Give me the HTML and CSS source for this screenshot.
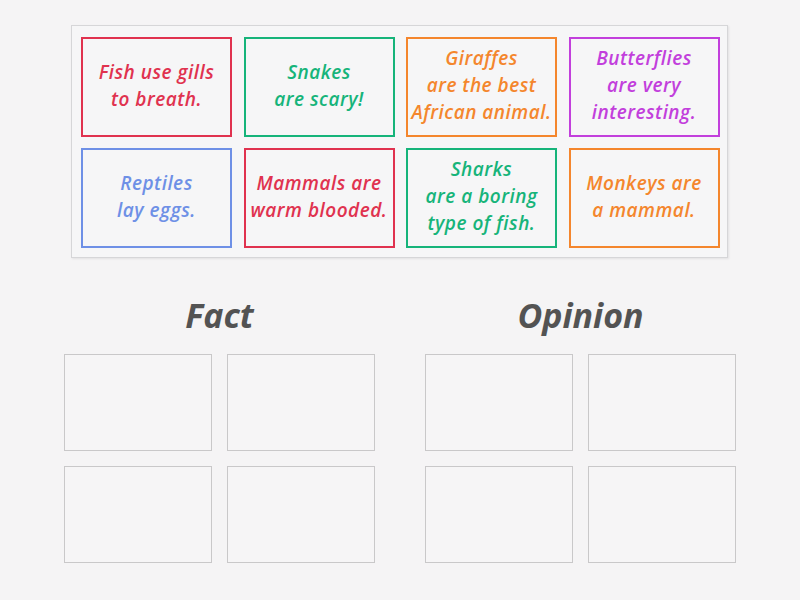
FILE: index.html
```html
<!DOCTYPE html>
<html lang="en">
<head>
    <meta charset="UTF-8">
    <meta name="viewport" content="width=device-width, initial-scale=1.0">
    <title>Fact or Opinion</title>
    <link rel="stylesheet" href="styles.css">
</head>
<body>

    <!-- cards waiting to be sorted -->
    <div class="pool">
        <div class="card red">Fish use gills<br>to breath.</div>
        <div class="card green">Snakes<br>are scary!</div>
        <div class="card orange">Giraffes<br>are the best<br>African animal.</div>
        <div class="card purple">Butterflies<br>are very<br>interesting.</div>
        <div class="card blue">Reptiles<br>lay eggs.</div>
        <div class="card red">Mammals are<br>warm blooded.</div>
        <div class="card green">Sharks<br>are a boring<br>type of fish.</div>
        <div class="card orange">Monkeys are<br>a mammal.</div>
    </div>

    <!-- drop zones -->
    <div class="groups">
        <div class="group">
            <h2 class="group-title">Fact</h2>
            <div class="slots">
                <div class="slot"></div>
                <div class="slot"></div>
                <div class="slot"></div>
                <div class="slot"></div>
            </div>
        </div>
        <div class="group">
            <h2 class="group-title">Opinion</h2>
            <div class="slots">
                <div class="slot"></div>
                <div class="slot"></div>
                <div class="slot"></div>
                <div class="slot"></div>
            </div>
        </div>
    </div>

</body>
</html>
```

FILE: styles.css
```css
* {
    margin: 0;
    padding: 0;
    box-sizing: border-box;
}

body {
    width: 800px;
    height: 600px;
    background-color: #f5f4f5;
    font-family: "Open Sans", "DejaVu Sans", sans-serif;
    padding-top: 25px;
    overflow: hidden;
}

/* 카드 목록 */
.pool {
    width: 657px;
    margin-left: 71px;
    display: grid;
    grid-template-columns: repeat(4, 151px);
    grid-auto-rows: 100px;
    column-gap: 11.5px;
    row-gap: 11px;
    padding: 11px 9px 9px 9px;
    background: #f6f6f7;
    border: 1px solid #d6d6d8;
    box-shadow: 1px 1px 2px rgba(0, 0, 0, 0.08);
}

.card {
    display: flex;
    align-items: center;
    justify-content: center;
    text-align: center;
    border: 2px solid currentColor;
    padding-bottom: 3px;
    font-size: 19px;
    font-style: italic;
    font-weight: 600;
    line-height: 27px;
    letter-spacing: 0.5px;
}

.red { color: #e0324f; }
.green { color: #16b47a; }
.orange { color: #f4862d; }
.purple { color: #c23fdc; }
.blue { color: #6e90e6; }

/* 분류 영역 */
.groups {
    display: flex;
    gap: 50px;
    margin-left: 64px;
    margin-top: 37px;
}

.group {
    width: 311px;
}

.group-title {
    text-align: center;
    font-size: 34px;
    font-style: italic;
    font-weight: 700;
    color: #535353;
    line-height: 40px;
    margin-bottom: 19px;
}

.slots {
    display: grid;
    grid-template-columns: repeat(2, 148px);
    grid-auto-rows: 97px;
    gap: 15px;
}

.slot {
    border: 1px solid #c9c8c9;
    background: #f6f5f6;
}
```
